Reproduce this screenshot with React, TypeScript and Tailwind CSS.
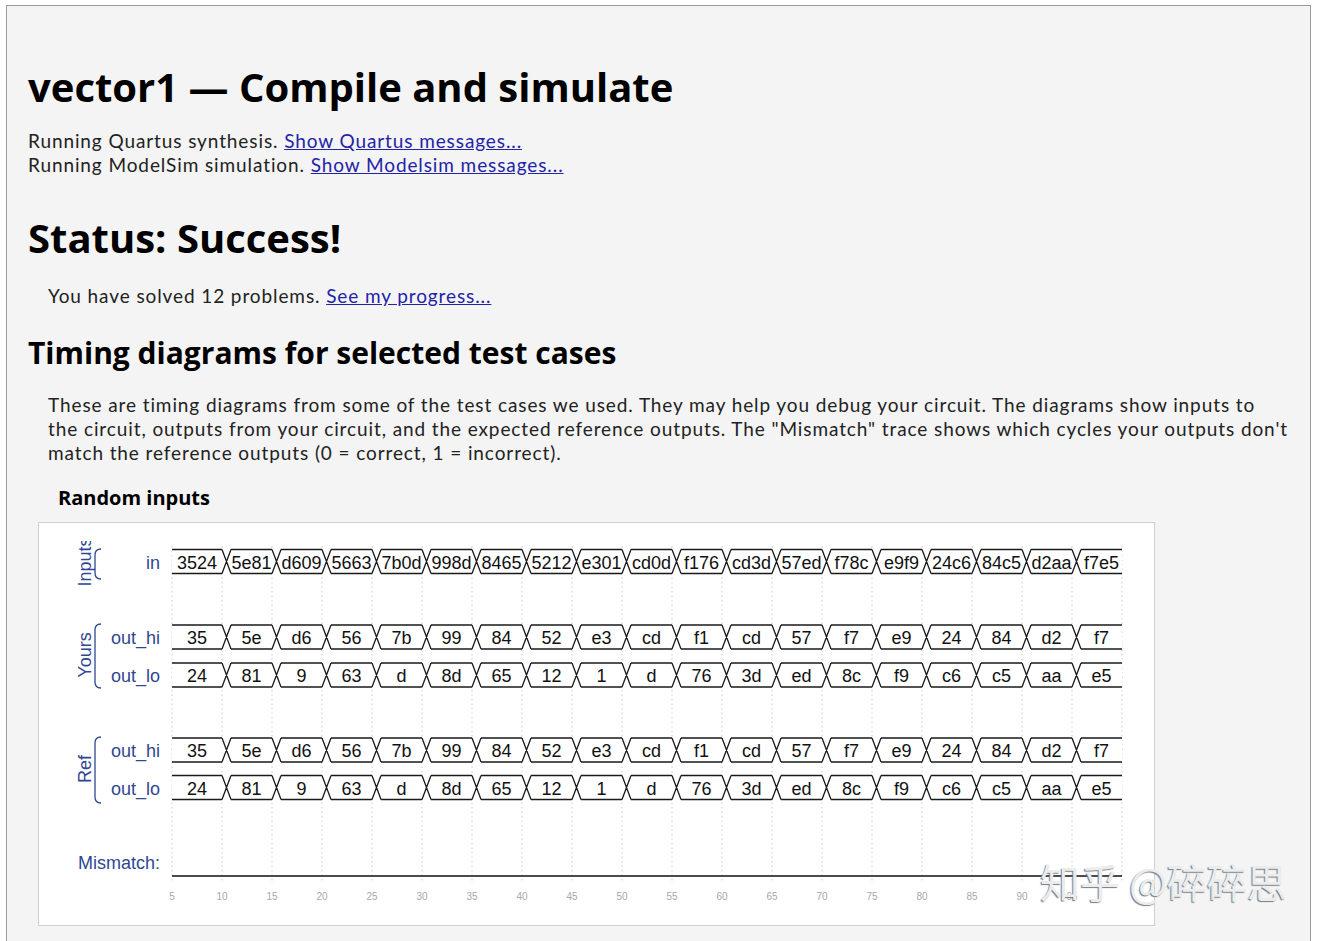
import { FC } from 'react';

const inVals = ['3524', '5e81', 'd609', '5663', '7b0d', '998d', '8465', '5212', 'e301', 'cd0d', 'f176', 'cd3d', '57ed', 'f78c', 'e9f9', '24c6', '84c5', 'd2aa', 'f7e5'];
const hiVals = ['35', '5e', 'd6', '56', '7b', '99', '84', '52', 'e3', 'cd', 'f1', 'cd', '57', 'f7', 'e9', '24', '84', 'd2', 'f7'];
const loVals = ['24', '81', '9', '63', 'd', '8d', '65', '12', '1', 'd', '76', '3d', 'ed', '8c', 'f9', 'c6', 'c5', 'aa', 'e5'];

const X0 = 172;
const STEP = 50;
const XEND = 1122;
const LABEL = '#2f4793';

const Bus: FC<{ y: number; values: string[] }> = ({ y, values }) => {
  const top = y - 12;
  const bot = y + 12;
  const n = values.length;
  let d = '';
  values.forEach((_, k) => {
    const b = X0 + STEP * k;
    const left = k === 0 ? X0 : b + 9;
    const right = k === n - 1 ? XEND : b + STEP;
    d += `M${left},${top}L${right},${top}M${left},${bot}L${right},${bot}`;
    if (k > 0) d += `M${b},${top}L${b + 9},${bot}M${b},${bot}L${b + 9},${top}`;
  });
  return (
    <g>
      <rect x={X0} y={top} width={XEND - X0} height={24} fill="#fff" />
      <path d={d} stroke="#1a1a1a" strokeWidth={1.3} fill="none" />
      {values.map((v, k) => {
        const b = X0 + STEP * k;
        const left = k === 0 ? X0 : b + 9;
        const right = k === n - 1 ? XEND : b + STEP;
        return (
          <text key={k} x={(left + right) / 2} y={y + 1} textAnchor="middle" dominantBaseline="central" fontSize={18} fill="#111">
            {v}
          </text>
        );
      })}
    </g>
  );
};

const Bracket: FC<{ y1: number; y2: number }> = ({ y1, y2 }) => (
  <path d={`M101,${y1}Q95,${y1} 95,${y1 + 6}L95,${y2 - 6}Q95,${y2} 101,${y2}`} stroke={LABEL} strokeWidth={1.3} fill="none" />
);

const Side: FC<{ text: string; cy: number }> = ({ text, cy }) => (
  <text x={91} y={cy} transform={`rotate(-90 91 ${cy})`} textAnchor="middle" fontSize={18} fill={LABEL}>
    {text}
  </text>
);

const Name: FC<{ text: string; y: number }> = ({ text, y }) => (
  <text x={160} y={y + 1} textAnchor="end" dominantBaseline="central" fontSize={18} fill={LABEL}>
    {text}
  </text>
);

const Timing: FC = () => (
  <svg width={1115} height={402} viewBox="39 523 1115 402" style={{ fontFamily: '"Liberation Sans", Arial, sans-serif' }}>
    <defs>
      <clipPath id="clipInputs">
        <rect x={60} y={541} width={60} height={60} />
      </clipPath>
    </defs>
    {Array.from({ length: 20 }, (_, k) => (
      <line key={k} x1={X0 + STEP * k} x2={X0 + STEP * k} y1={546} y2={882} stroke="#c9c9c9" strokeWidth={1} strokeDasharray="1.5 3" />
    ))}

    <g clipPath="url(#clipInputs)">
      <Side text="Inputs" cy={562} />
    </g>
    <Bracket y1={549} y2={579} />
    <Name text="in" y={561.5} />
    <Bus y={561.5} values={inVals} />

    <Side text="Yours" cy={655} />
    <Bracket y1={624} y2={688} />
    <Name text="out_hi" y={637} />
    <Name text="out_lo" y={675} />
    <Bus y={637} values={hiVals} />
    <Bus y={675} values={loVals} />

    <Side text="Ref" cy={769} />
    <Bracket y1={737} y2={803} />
    <Name text="out_hi" y={750} />
    <Name text="out_lo" y={787.5} />
    <Bus y={750} values={hiVals} />
    <Bus y={787.5} values={loVals} />

    <Name text="Mismatch:" y={862} />
    <line x1={X0} x2={XEND} y1={876} y2={876} stroke="#111" strokeWidth={1.3} />

    {Array.from({ length: 19 }, (_, k) => (
      <text key={k} x={X0 + STEP * k} y={896} textAnchor="middle" dominantBaseline="central" fontSize={10} fill="#a8a8a8">
        {5 * (k + 1)}
      </text>
    ))}
  </svg>
);

const linkCls = 'text-[#2323a8] underline';

export default function App() {
  return (
    <div className="relative min-h-[941px] bg-white pl-[6px] pt-[5px]">
      <div
        className="w-[1305px] min-h-[940px] border border-[#9a9a9a] bg-[#f4f4f4] px-[21px] pt-[57px] text-[#222]"
        style={{ fontFamily: 'Lato, "Noto Sans", sans-serif' }}
      >
        <h1 className="text-[40px] font-bold leading-[48px] text-black" style={{ fontFamily: '"Open Sans", sans-serif' }}>
          vector1 — Compile and simulate
        </h1>
        <div className="mt-[18px] text-[19px] leading-[24px] tracking-[0.9px]">
          <div>
            Running Quartus synthesis. <a className={linkCls}>Show Quartus messages...</a>
          </div>
          <div>
            Running ModelSim simulation. <a className={linkCls}>Show Modelsim messages...</a>
          </div>
        </div>

        <h2 className="mt-[37px] text-[40px] font-bold leading-[48px] text-black" style={{ fontFamily: '"Open Sans", sans-serif' }}>
          Status: Success!
        </h2>
        <p className="ml-5 mt-[22px] text-[19px] leading-[24px] tracking-[0.9px]">
          You have solved 12 problems. <a className={linkCls}>See my progress...</a>
        </p>

        <h3 className="mt-[27px] text-[30px] font-bold leading-[36px] text-black" style={{ fontFamily: '"Open Sans", sans-serif' }}>
          Timing diagrams for selected test cases
        </h3>
        <p className="ml-5 mt-[22px] text-[19px] leading-[24px] tracking-[0.9px]">
          These are timing diagrams from some of the test cases we used. They may help you debug your circuit. The diagrams show inputs to the circuit, outputs from your circuit, and the expected reference outputs. The "Mismatch" trace shows which cycles your outputs don't match the reference outputs (0 = correct, 1 = incorrect).
        </p>

        <h4 className="ml-[30px] mt-[21px] text-[20px] font-bold leading-[24px] text-black" style={{ fontFamily: '"Open Sans", sans-serif' }}>
          Random inputs
        </h4>
        <div className="ml-[10px] mt-[12px] h-[404px] w-[1117px] border border-[#cfcfcf] bg-white">
          <Timing />
        </div>
      </div>

      <div
        className="absolute left-[1040px] top-[857px] text-[40px] leading-[48px] text-[#ececec]"
        style={{ fontFamily: '"Noto Sans CJK SC", sans-serif', textShadow: '-1px 1px 1px #7a7a7a' }}
      >
        知乎 @碎碎思
      </div>
    </div>
  );
}
